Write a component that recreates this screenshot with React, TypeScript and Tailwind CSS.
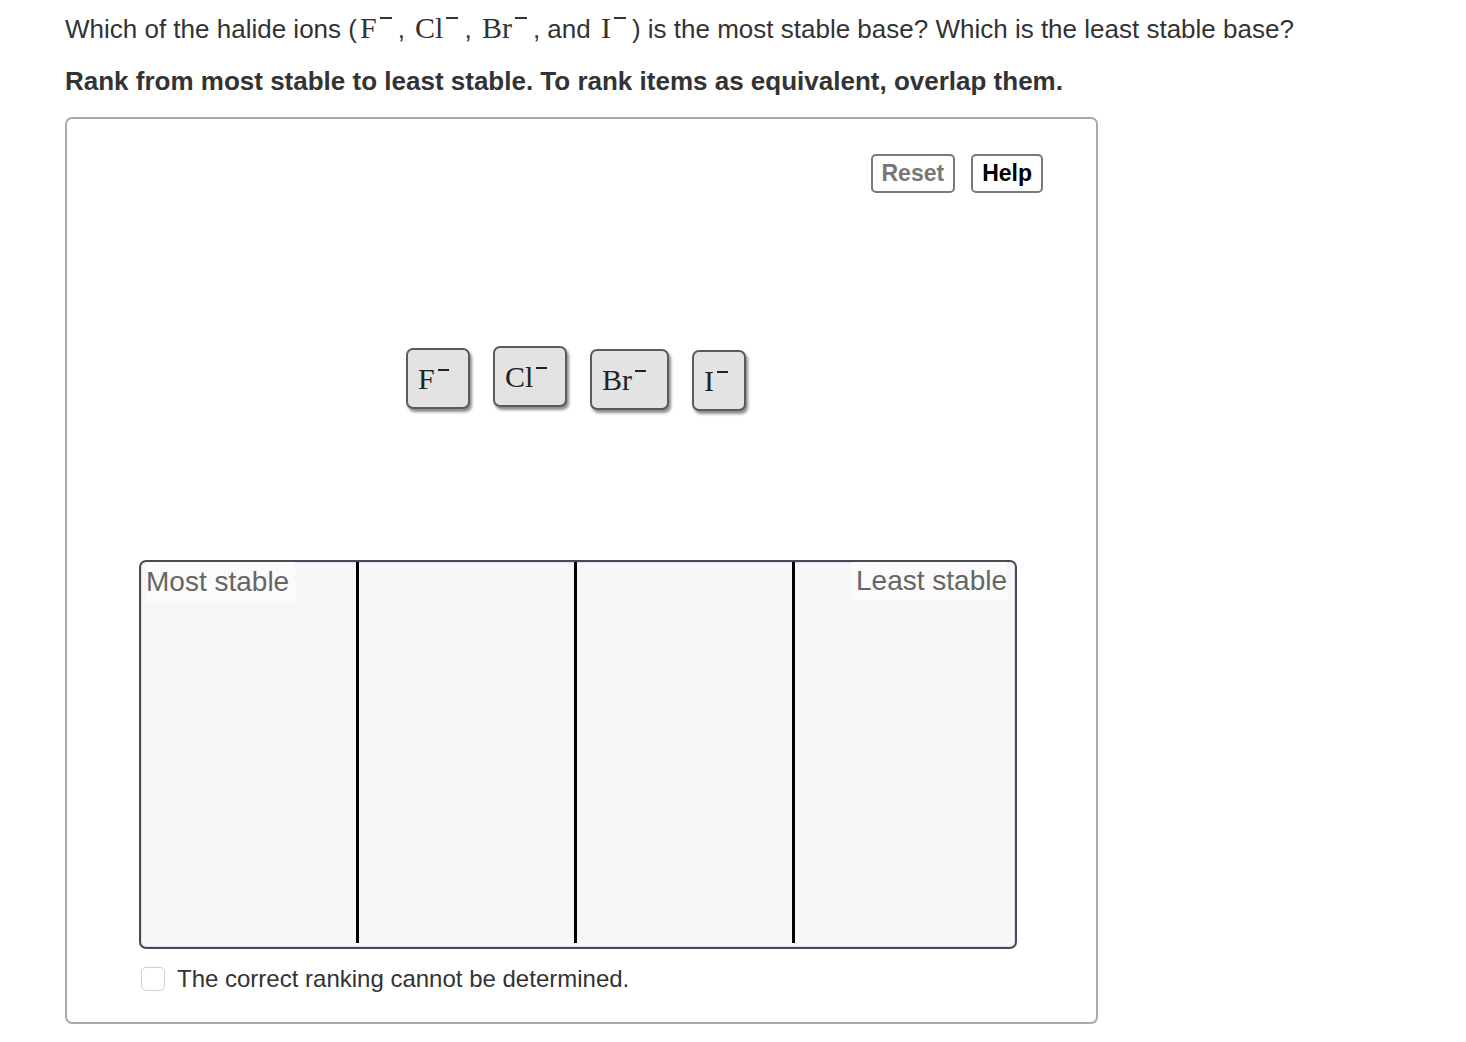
import React from "react";

// Halide ranking question — a static rendering of the drag-and-drop ranking widget.
const ions = [
  { sym: "F", w: "w-[64px]", lift: "mt-[2px]" },
  { sym: "Cl", w: "w-[74px]", lift: "mt-0" },
  { sym: "Br", w: "w-[79px]", lift: "mt-[3px]" },
  { sym: "I", w: "w-[54px]", lift: "mt-[4px]" },
];

// superscript minus drawn as a short bar, like the typeset math in the reference
function Minus({ w, lift }: { w: string; lift: string }) {
  return <span className={`ml-[3px] inline-block h-[1.5px] ${w} ${lift} bg-current`} />;
}

function Ion({ sym }: { sym: string }) {
  return (
    <span className="ml-[3px] mr-[6px] font-['Liberation_Serif',serif] text-[30px] leading-none">
      {sym}
      <Minus w="w-[12px]" lift="align-[0.64em]" />
    </span>
  );
}

function Tile({ sym, w, lift }: { sym: string; w: string; lift: string }) {
  return (
    <div
      className={`${w} ${lift} flex h-[61px] items-center rounded-[7px] border-2 border-[#5a5a66] bg-[#e3e3e3] pl-[10px] shadow-[2px_3px_3px_rgba(0,0,0,0.45)]`}
    >
      <span className="font-['Liberation_Serif',serif] text-[30px] leading-none text-[#222]">
        {sym}
        <Minus w="w-[11px]" lift="align-[0.6em]" />
      </span>
    </div>
  );
}

export default function App() {
  return (
    <div className="min-h-[1042px] bg-white pl-[65px] pt-[11px] font-['Liberation_Sans',Arial,sans-serif] text-[#333]">
      <p className="h-[36px] text-[26px] leading-[36px]">
        Which of the halide ions (<Ion sym="F" />, <Ion sym="Cl" />, <Ion sym="Br" />, and{" "}
        <Ion sym="I" />) is the most stable base? Which is the least stable base?
      </p>
      <p className="mt-[16px] text-[26px] font-bold leading-[36px]">
        Rank from most stable to least stable. To rank items as equivalent, overlap them.
      </p>

      <div className="mt-[18px] flex h-[907px] w-[1033px] flex-col rounded-[7px] border-2 border-[#aaaaaa] pl-[72px]">
        <div className="mr-[53px] mt-[35px] flex justify-end gap-[16px]">
          <button className="h-[39px] rounded-[5px] border-2 border-[#727b80] px-[9px] text-[23px] font-bold text-[#777]">
            Reset
          </button>
          <button className="h-[39px] rounded-[5px] border-2 border-[#727b80] px-[9px] text-[23px] font-bold text-black">
            Help
          </button>
        </div>

        <div className="ml-[267px] mt-[153px] flex gap-[23px]">
          {ions.map((ion) => (
            <Tile key={ion.sym} {...ion} />
          ))}
        </div>

        <div className="mt-[149px] flex h-[389px] w-[878px] overflow-hidden rounded-[7px] border-2 border-[#4a4a55] bg-[#f7f7f7] shadow-[inset_0_0_0_1px_#dcdcf2]">
          {[0, 1, 2, 3].map((i) => (
            <div
              key={i}
              className={`relative mb-[4px] ${i < 3 ? "w-[218px] border-r-[3px] border-black" : "flex-1"}`}
            >
              {i === 0 ? (
                <span className="absolute left-[5px] top-0 bg-[#fbfbfb] pr-[6px] text-[28px] leading-[40px] text-[#666]">
                  Most stable
                </span>
              ) : null}
              {i === 3 ? (
                <span className="absolute right-[8px] top-0 bg-[#fbfbfb] pl-[4px] text-[28px] leading-[38px] text-[#666]">
                  Least stable
                </span>
              ) : null}
            </div>
          ))}
        </div>

        <label className="ml-[2px] mt-[12px] flex items-center gap-[12px]">
          <span className="h-[24px] w-[24px] rounded-[5px] border border-[#cfcfcf] bg-white" />
          <span className="text-[24px] text-[#333]">The correct ranking cannot be determined.</span>
        </label>
      </div>
    </div>
  );
}
